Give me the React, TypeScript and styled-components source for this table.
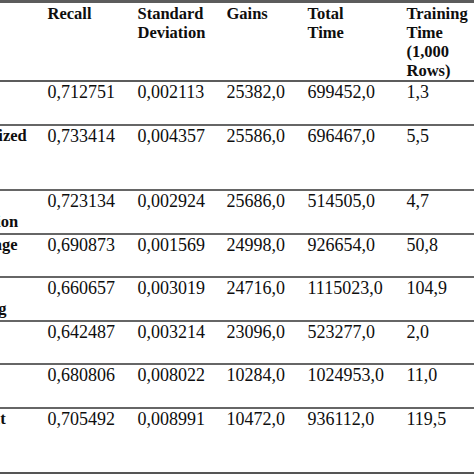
import React from "react";
import styled, { createGlobalStyle } from "styled-components";

const Global = createGlobalStyle`
  html, body { margin: 0; padding: 0; background: #fff; }
`;

const Frame = styled.div`
  width: 474px;
  height: 474px;
  overflow: hidden;
  background: #fff;
`;

const Table = styled.table`
  margin-left: -70px;
  width: 556px;
  border-collapse: collapse;
  table-layout: fixed;
  font-family: "Liberation Serif", "Times New Roman", serif;
  color: #0e0e0e;
`;

const Col = styled.col<{ $w: number }>`
  width: ${(p) => p.$w}px;
`;

const HeadCell = styled.th`
  text-align: left;
  vertical-align: top;
  font-weight: 700;
  font-size: 16.5px;
  line-height: 19px;
  padding: 1px 0 0 11px;
  border-top: 3px solid #5c5c5c;
  border-bottom: 2px solid #5c5c5c;
`;

const LabelCell = styled.th<{ $tall: boolean }>`
  text-align: left;
  vertical-align: top;
  font-weight: 700;
  font-size: 16.5px;
  line-height: 20.8px;
  padding: 0 0 ${(p) => (p.$tall ? 1 : 0)}px 11px;
  white-space: nowrap;
  border-top: 2px solid #666;
`;

const Cell = styled.td`
  text-align: left;
  vertical-align: top;
  font-size: 18px;
  line-height: 20.8px;
  padding: 0 0 0 11px;
  white-space: nowrap;
  border-top: 2px solid #666;
`;

const FootCell = styled.td`
  height: 10px;
  padding: 0;
  border-top: 3px solid #555;
  border-left: 1px solid #555;
`;

const Lines = ({ lines }: { lines: string[] }) => (
  <>
    {lines.map((l, i) => (
      <React.Fragment key={i}>
        {i > 0 && <br />}
        {l}
      </React.Fragment>
    ))}
  </>
);

const headers: string[][] = [
  ["Model"],
  ["Recall"],
  ["Standard", "Deviation"],
  ["Gains"],
  ["Total", "Time"],
  ["Training", "Time", "(1,000", "Rows)"],
];

const rows: { label: string[]; values: string[] }[] = [
  { label: ["Naive", "Bayes"], values: ["0,712751", "0,002113", "25382,0", "699452,0", "1,3"] },
  { label: ["Regularized", "Linear", "Model"], values: ["0,733414", "0,004357", "25586,0", "696467,0", "5,5"] },
  { label: ["Logistic", "Regression"], values: ["0,723134", "0,002924", "25686,0", "514505,0", "4,7"] },
  { label: ["Advantage", "Model"], values: ["0,690873", "0,001569", "24998,0", "926654,0", "50,8"] },
  { label: ["Deep", "Learning"], values: ["0,660657", "0,003019", "24716,0", "1115023,0", "104,9"] },
  { label: ["Neural", "Net"], values: ["0,642487", "0,003214", "23096,0", "523277,0", "2,0"] },
  { label: ["Extra", "Trees"], values: ["0,680806", "0,008022", "10284,0", "1024953,0", "11,0"] },
  { label: ["Gradient", "Boosted", "Trees"], values: ["0,705492", "0,008991", "10472,0", "936112,0", "119,5"] },
];

const widths = [106, 90, 89, 81, 99, 91];

export default function App() {
  return (
    <Frame>
      <Global />
      <Table>
        <colgroup>
          {widths.map((w, i) => (
            <Col key={i} $w={w} />
          ))}
        </colgroup>
        <thead>
          <tr>
            {headers.map((h, i) => (
              <HeadCell key={i} scope="col">
                <Lines lines={h} />
              </HeadCell>
            ))}
          </tr>
        </thead>
        <tbody>
          {rows.map((r, i) => (
            <tr key={i}>
              <LabelCell scope="row" $tall={r.label.length > 2}>
                <Lines lines={r.label} />
              </LabelCell>
              {r.values.map((v, j) => (
                <Cell key={j}>{v}</Cell>
              ))}
            </tr>
          ))}
          <tr>
            {widths.map((_, i) => (
              <FootCell key={i} />
            ))}
          </tr>
        </tbody>
      </Table>
    </Frame>
  );
}
